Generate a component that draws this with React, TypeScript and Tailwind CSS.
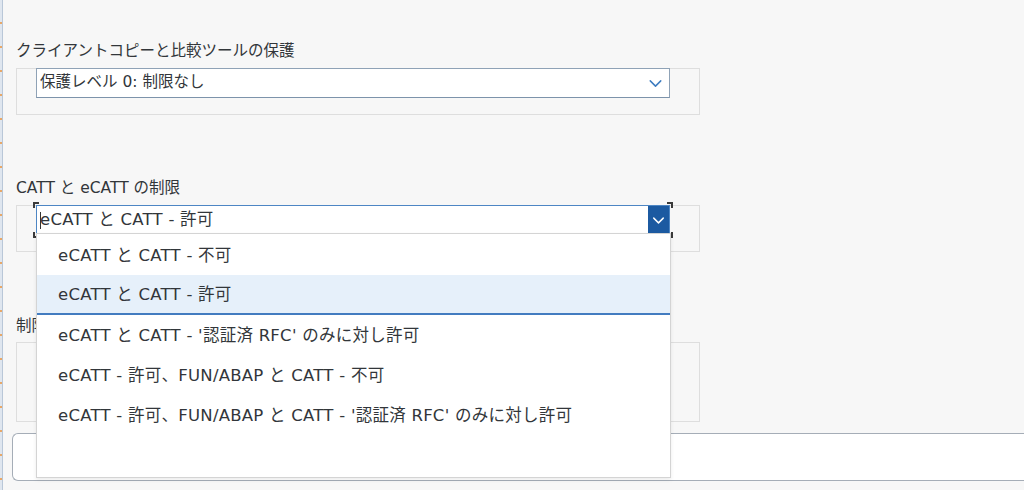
import { ChevronDown } from "lucide-react"

const font = { fontFamily: '"DejaVu Sans", "Noto Sans CJK JP", sans-serif' }

const options = [
  "eCATT と CATT - 不可",
  "eCATT と CATT - 許可",
  "eCATT と CATT - '認証済 RFC' のみに対し許可",
  "eCATT - 許可、FUN/ABAP と CATT - 不可",
  "eCATT - 許可、FUN/ABAP と CATT - '認証済 RFC' のみに対し許可",
]

function Corner({ className }: { className: string }) {
  return <span className={"absolute h-[6px] w-[6px] border-[#3a3a3a] " + className} />
}

export default function App() {
  return (
    <div className="flex h-[490px] w-[1024px] overflow-hidden bg-[#f7f7f7] text-[15.5px] text-[#32363a]" style={font}>
      {/* left frame edge */}
      <div className="h-full w-[3px] border-r border-[#b9c7d8] bg-[repeating-linear-gradient(to_bottom,#dfe6ef_0px,#dfe6ef_22px,#e8a868_22px,#e8a868_24px)]" />

      <div className="relative flex flex-1 flex-col pt-[40px]">
        {/* section 1 */}
        <div className="pl-[13px]">
          <div className="h-[22px] leading-[22px]">クライアントコピーと比較ツールの保護</div>
          <div className="mt-[6px] h-[47px] w-[684px] border border-[#dedede]">
            <div className="-mt-px ml-[19px] flex h-[30px] w-[634px] items-center justify-between border border-[#8fa2b6] border-b-[#7d93ab] bg-white pl-[3px] pr-[3px]">
              <span className="leading-none">保護レベル 0: 制限なし</span>
              <ChevronDown className="h-[21px] w-[21px] text-[#3d7cc0]" strokeWidth={1.7} />
            </div>
          </div>
        </div>

        {/* section 2 */}
        <div className="mt-[62px] pl-[13px]">
          <div className="h-[22px] leading-[22px]">CATT と eCATT の制限</div>
          <div className="mt-[6px] h-[47px] w-[684px] border border-[#dedede]">
            <div className="relative -mt-px ml-[19px] flex h-[30px] w-[634px] items-stretch border border-[#4d86c4] bg-white">
              <Corner className="-left-[4px] -top-[4px] border-l-2 border-t-2" />
              <Corner className="-left-[4px] -bottom-[4px] border-b-2 border-l-2" />
              <Corner className="-right-[4px] -top-[4px] border-r-2 border-t-2" />
              <Corner className="-right-[4px] -bottom-[4px] border-b-2 border-r-2" />
              <div className="relative flex flex-1 items-center pl-[3px]">
                <span className="absolute left-[3px] top-[6px] h-[17px] w-px bg-[#333]" />
                <span className="text-[16.5px] leading-none tracking-[0.25px]">eCATT と CATT - 許可</span>
              </div>
              <div className="flex w-[21px] items-center justify-center bg-[#1c5aa1]">
                <ChevronDown className="h-[19px] w-[19px] text-white" strokeWidth={1.8} />
              </div>
            </div>
          </div>
        </div>

        {/* section 3 */}
        <div className="mt-[63px] pl-[13px]">
          <div className="h-[22px] leading-[22px]">制限</div>
          <div className="mt-[5px] h-[80px] w-[684px] border border-[#dedede]" />
        </div>

        {/* bottom input */}
        <div className="ml-[9px] mt-[11px] h-[48px] rounded-l-[6px] border border-r-0 border-[#a5adb7] bg-white" />

        {/* open dropdown list */}
        <div className="absolute left-[33px] top-[233px] h-[245px] w-[635px] border border-[#d4d4d4] bg-white pt-px text-[16.5px] tracking-[0.25px] shadow-[0_2px_4px_rgba(0,0,0,0.08)]">
          {options.map((o, i) => (
            <div
              key={o}
              className={
                i === 1
                  ? "flex h-[40px] items-center border-b-2 border-[#427cc0] bg-[#e6f0fa] pl-[21px] pt-[2px]"
                  : "flex h-[40px] items-center pl-[21px] pt-[2px]"
              }
            >
              {o}
            </div>
          ))}
        </div>
      </div>
    </div>
  )
}
